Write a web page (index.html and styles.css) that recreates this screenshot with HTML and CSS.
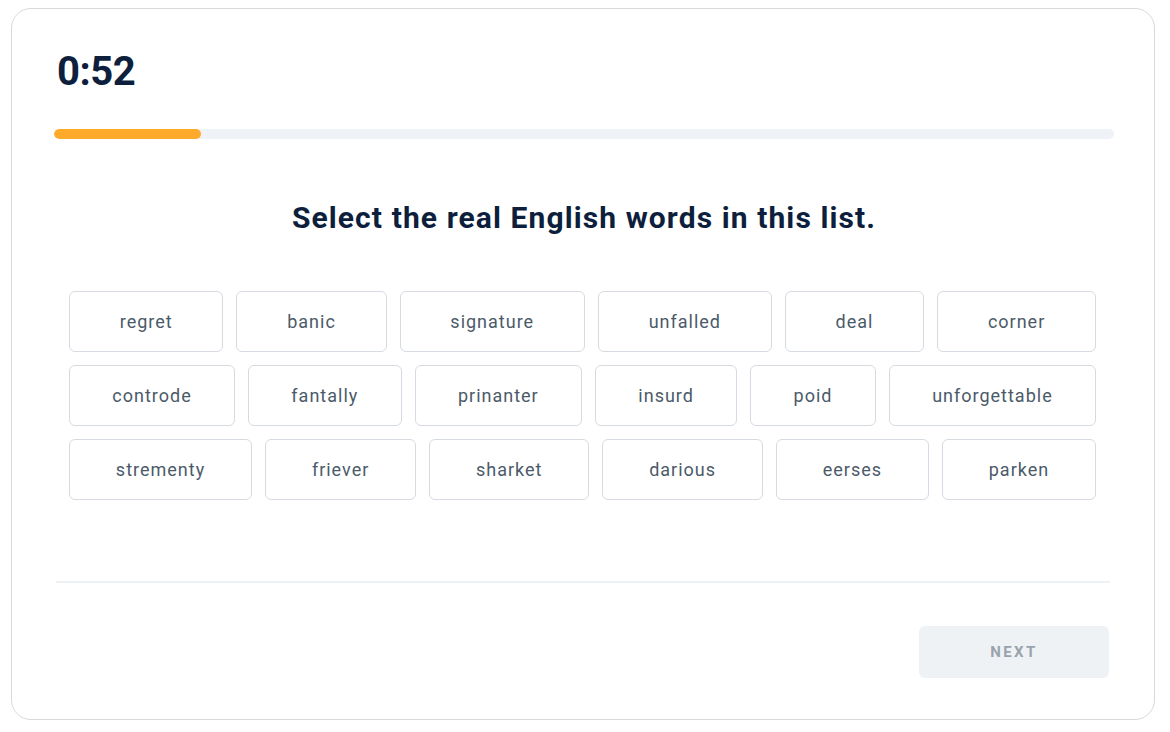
FILE: index.html
```html
<!DOCTYPE html>
<html lang="en">
<head>
<meta charset="utf-8">
<title>Quiz</title>
<link rel="stylesheet" href="styles.css">
</head>
<body>
<main class="card">
  <div class="timer">0:52</div>
  <div class="progress"><div class="progress-fill" style="width: 13.9%"></div></div>
  <h1 class="question">Select the real English words in this list.</h1>
  <div class="words">
    <div class="row">
      <button class="tile">regret</button>
      <button class="tile">banic</button>
      <button class="tile">signature</button>
      <button class="tile">unfalled</button>
      <button class="tile">deal</button>
      <button class="tile">corner</button>
    </div>
    <div class="row">
      <button class="tile">controde</button>
      <button class="tile">fantally</button>
      <button class="tile">prinanter</button>
      <button class="tile">insurd</button>
      <button class="tile">poid</button>
      <button class="tile">unforgettable</button>
    </div>
    <div class="row">
      <button class="tile">strementy</button>
      <button class="tile">friever</button>
      <button class="tile">sharket</button>
      <button class="tile">darious</button>
      <button class="tile">eerses</button>
      <button class="tile">parken</button>
    </div>
  </div>
  <div class="divider"></div>
  <div class="footer">
    <button class="next">NEXT</button>
  </div>
</main>
</body>
</html>
```

FILE: styles.css
```css
html, body {
  margin: 0;
  padding: 0;
  background: #ffffff;
}
body {
  padding: 8px 15px 12px 11px;
  font-family: Roboto, "Noto Sans", "Liberation Sans", sans-serif;
}
.card {
  box-sizing: border-box;
  height: 712px;
  border: 1px solid #d9d9d9;
  border-radius: 20px;
  padding: 39px 40px 0 42px;
  display: flex;
  flex-direction: column;
}
.timer {
  font-size: 40px;
  line-height: 48px;
  font-weight: 700;
  color: #0d1f3c;
  margin-left: 3px;
  letter-spacing: -0.5px;
}
.progress {
  margin-top: 33px;
  height: 10px;
  background: #eff2f6;
  border-radius: 5px;
  overflow: hidden;
}
.progress-fill {
  height: 100%;
  background: #ffaa2a;
  border-radius: 5px;
}
.question {
  margin: 61px 0 0 0;
  font-size: 30px;
  line-height: 36px;
  font-weight: 700;
  color: #0d1f3c;
  text-align: center;
  letter-spacing: 1.1px;
}
.words {
  margin: 55px 18px 0 15px;
  display: flex;
  flex-direction: column;
  gap: 13px;
}
.row {
  display: flex;
  gap: 13px;
}
.tile {
  flex: 1 1 auto;
  height: 61px;
  padding: 0 30px;
  background: #ffffff;
  border: 1px solid #d6dbe1;
  border-radius: 6px;
  font-family: inherit;
  font-size: 18px;
  color: #4b5a69;
  letter-spacing: 1px;
}
.divider {
  margin: 81px 4px 0 2px;
  height: 2px;
  background: #eef1f4;
}
.footer {
  display: flex;
  justify-content: flex-end;
  margin: 43px 5px 0 0;
}
.next {
  width: 190px;
  height: 52px;
  border: none;
  border-radius: 6px;
  background: #eff2f5;
  color: #9aa3ac;
  font-family: inherit;
  font-size: 15px;
  font-weight: 700;
  letter-spacing: 2.4px;
}
```
